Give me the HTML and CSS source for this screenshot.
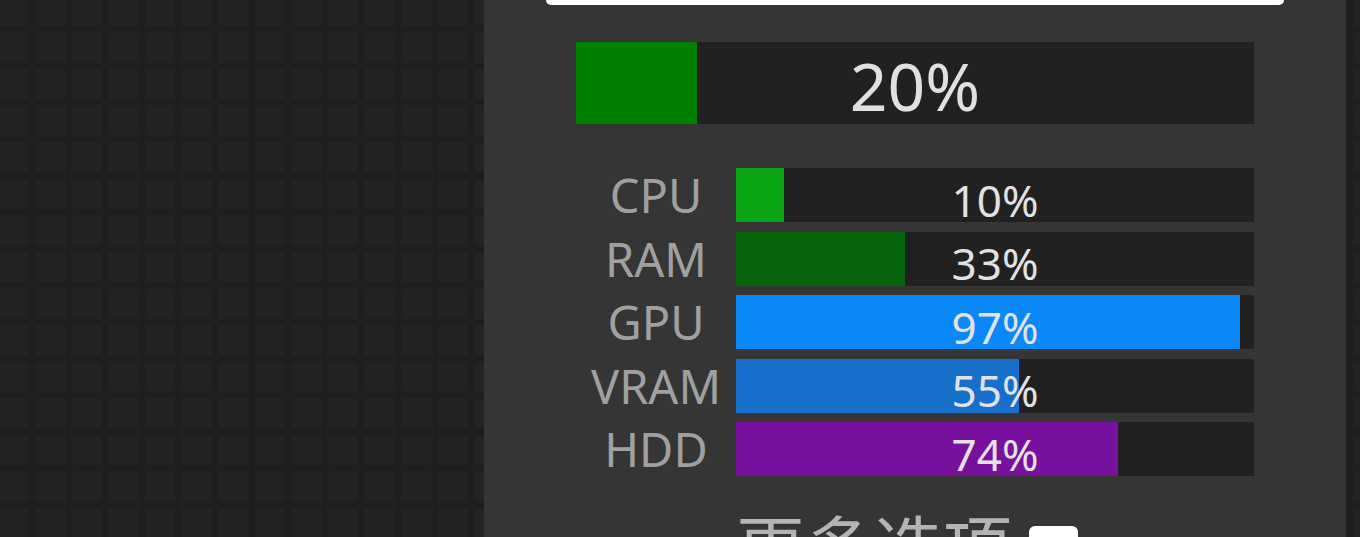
FILE: index.html
```html
<!DOCTYPE html>
<html lang="zh">
<head>
<meta charset="utf-8">
<title>Monitor</title>
<link rel="stylesheet" href="styles.css">
</head>
<body>
<div class="canvas">
  <div class="spacer"></div>
  <section class="panel">
    <div class="input"></div>
    <div class="main-bar">
      <div class="fill main-fill" style="width:17.8%"></div>
      <span class="main-text">20%</span>
    </div>
    <div class="stats">
      <div class="label">CPU</div>
      <div class="bar"><div class="fill cpu" style="width:9.3%"></div><span class="val">10%</span></div>
      <div class="label">RAM</div>
      <div class="bar"><div class="fill ram" style="width:32.6%"></div><span class="val">33%</span></div>
      <div class="label">GPU</div>
      <div class="bar"><div class="fill gpu" style="width:97.3%"></div><span class="val">97%</span></div>
      <div class="label">VRAM</div>
      <div class="bar"><div class="fill vram" style="width:54.6%"></div><span class="val">55%</span></div>
      <div class="label">HDD</div>
      <div class="bar"><div class="fill hdd" style="width:73.7%"></div><span class="val">74%</span></div>
    </div>
    <div class="options">
      <span class="opt-text">更多选项</span>
      <span class="check"></span>
    </div>
  </section>
</div>
</body>
</html>
```

FILE: styles.css
```css
html, body {
  margin: 0;
  padding: 0;
  height: 100%;
  overflow: hidden;
}
body {
  background-color: #232323;
  background-image:
    repeating-linear-gradient(90deg, transparent 0 28px, #202020 28px 30px, #1e1e1e 30px 34px, #202020 34px 36px, transparent 36px 36.6px),
    repeating-linear-gradient(0deg, transparent 0 28px, #202020 28px 30px, #1e1e1e 30px 34px, #202020 34px 36px, transparent 36px 36.6px);
  font-family: "Noto Sans", "Open Sans", "Noto Sans CJK SC", sans-serif;
}
.canvas {
  display: flex;
  height: 537px;
}
.spacer {
  width: 484px;
  flex: none;
}
.panel {
  width: 862px;
  flex: none;
  background: #353535;
  display: flex;
  flex-direction: column;
  overflow: hidden;
}
.panel > * {
  flex-shrink: 0;
}
.input {
  margin-left: 62px;
  width: 738px;
  height: 5px;
  background: #ffffff;
  border-radius: 0 0 8px 8px;
}
.main-bar {
  position: relative;
  margin: 37px 0 0 92px;
  width: 678px;
  height: 82px;
  background: #212121;
  display: flex;
  align-items: center;
  justify-content: center;
}
.fill {
  position: absolute;
  left: 0;
  top: 0;
  bottom: 0;
}
.main-fill { background: #008000; }
.main-text {
  position: relative;
  color: #e0e0e0;
  font-size: 66px;
  line-height: 1;
  margin-top: 4px;
}
.stats {
  margin: 44px 0 0 92px;
  display: grid;
  grid-template-columns: 160px 518px;
  grid-auto-rows: 54px;
  row-gap: 9.5px;
}
.label {
  color: #a0a0a0;
  font-size: 47px;
  text-align: center;
  line-height: 54px;
}
.bar {
  position: relative;
  background: #212121;
  display: flex;
  align-items: center;
  justify-content: center;
}
.val {
  position: relative;
  color: #e2e2e2;
  font-size: 44px;
  line-height: 1;
  margin-top: 9px;
}
.cpu { background: #0ba515; }
.ram { background: #06640d; }
.gpu { background: #0b88f8; }
.vram { background: #176fcc; }
.hdd { background: #78109e; }
.options {
  margin: 34px 0 0 252px;
  display: flex;
  align-items: flex-start;
  gap: 17px;
}
.opt-text {
  color: #b4b4b4;
  font-size: 69px;
  line-height: 1;
  font-family: "Noto Sans CJK SC", sans-serif;
}
.check {
  width: 49px;
  height: 49px;
  margin-top: 16px;
  background: #ffffff;
  border-radius: 6px;
}
```
